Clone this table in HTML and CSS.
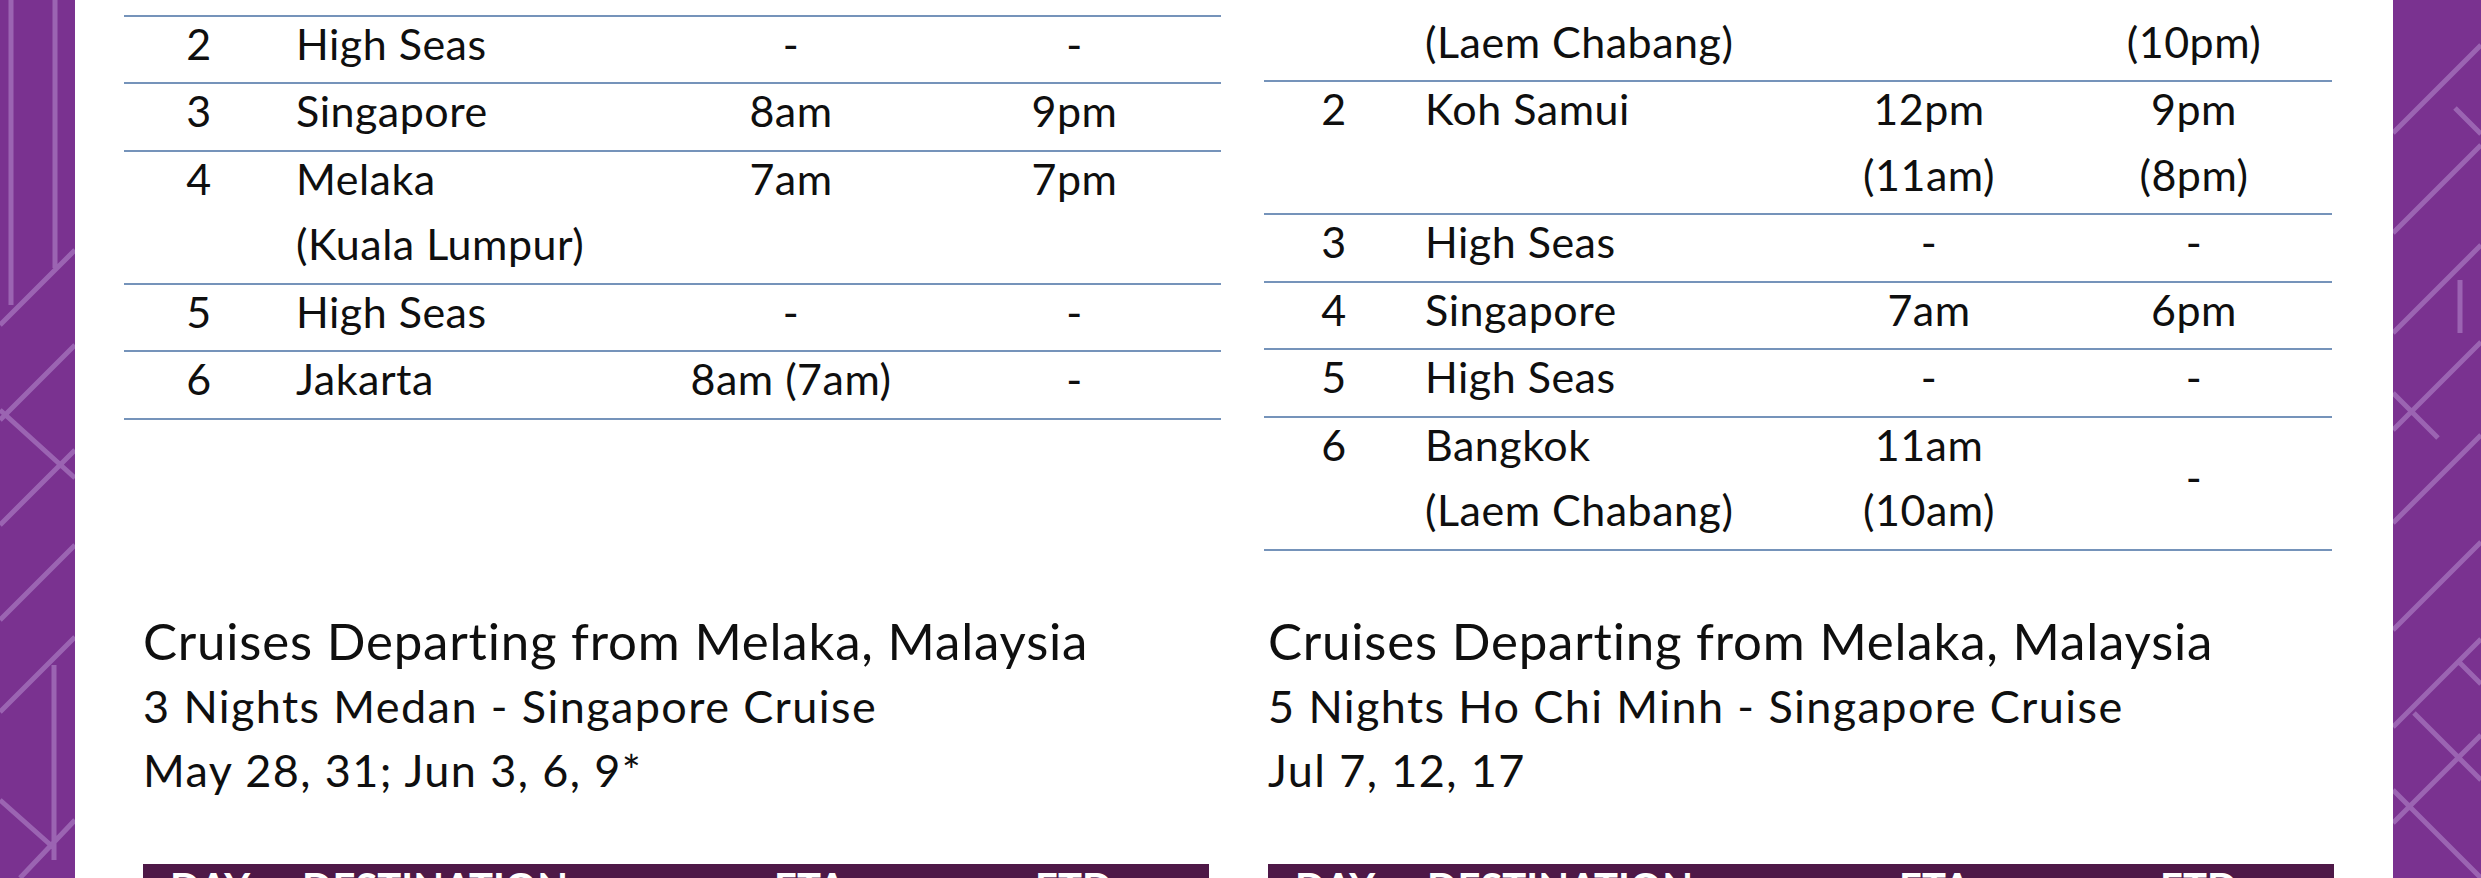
FILE: index.html
```html
<!DOCTYPE html>
<html lang="en">
<head>
<meta charset="utf-8">
<title>Cruise Itineraries</title>
<link rel="stylesheet" href="styles.css">
</head>
<body>
<div class="frame">
  <aside class="band band-left">
    <svg class="deco" viewBox="0 0 75 878" width="75" height="878" preserveAspectRatio="none">
      <path d="M11 0 V305 M55 0 V268 M75 250 L0 325 M75 345 L0 420 M0 410 L75 478 M75 450 L0 525 M75 545 L0 620 M75 637 L0 712 M54 665 V860 M0 800 L54 848 M75 820 L20 878"/>
    </svg>
  </aside>

  <main class="sheet">
    <section class="itin itin-left">
      <div class="row"><span class="c-day">1</span><span class="c-dest">Jakarta</span><span class="c-t">-</span><span class="c-t">10pm (9pm)</span></div>
      <div class="row"><span class="c-day">2</span><span class="c-dest">High Seas</span><span class="c-t">-</span><span class="c-t">-</span></div>
      <div class="row"><span class="c-day">3</span><span class="c-dest">Singapore</span><span class="c-t">8am</span><span class="c-t">9pm</span></div>
      <div class="row"><span class="c-day">4</span><span class="c-dest">Melaka<br>(Kuala Lumpur)</span><span class="c-t">7am</span><span class="c-t">7pm</span></div>
      <div class="row"><span class="c-day">5</span><span class="c-dest">High Seas</span><span class="c-t">-</span><span class="c-t">-</span></div>
      <div class="row"><span class="c-day">6</span><span class="c-dest">Jakarta</span><span class="c-t">8am (7am)</span><span class="c-t">-</span></div>
    </section>

    <section class="itin itin-right">
      <div class="row"><span class="c-day">1</span><span class="c-dest">Bangkok<br>(Laem Chabang)</span><span class="c-t">-</span><span class="c-t">11pm<br>(10pm)</span></div>
      <div class="row"><span class="c-day">2</span><span class="c-dest">Koh Samui</span><span class="c-t">12pm<br>(11am)</span><span class="c-t">9pm<br>(8pm)</span></div>
      <div class="row"><span class="c-day">3</span><span class="c-dest">High Seas</span><span class="c-t">-</span><span class="c-t">-</span></div>
      <div class="row"><span class="c-day">4</span><span class="c-dest">Singapore</span><span class="c-t">7am</span><span class="c-t">6pm</span></div>
      <div class="row"><span class="c-day">5</span><span class="c-dest">High Seas</span><span class="c-t">-</span><span class="c-t">-</span></div>
      <div class="row"><span class="c-day">6</span><span class="c-dest">Bangkok<br>(Laem Chabang)</span><span class="c-t">11am<br>(10am)</span><span class="c-t mid">-</span></div>
    </section>

    <div class="cruise cruise-left">
      <h2 class="cruise-title">Cruises Departing from Melaka, Malaysia</h2>
      <p class="cruise-line">3 Nights Medan - Singapore Cruise</p>
      <p class="cruise-line">May 28, 31; Jun 3, 6, 9*</p>
    </div>

    <div class="cruise cruise-right">
      <h2 class="cruise-title">Cruises Departing from Melaka, Malaysia</h2>
      <p class="cruise-line">5 Nights Ho Chi Minh - Singapore Cruise</p>
      <p class="cruise-line">Jul 7, 12, 17</p>
    </div>

    <div class="thead thead-left"><span class="h-day">DAY</span><span class="h-dest">DESTINATION</span><span class="h-eta">ETA</span><span class="h-etd">ETD</span></div>
    <div class="thead thead-right"><span class="h-day">DAY</span><span class="h-dest">DESTINATION</span><span class="h-eta">ETA</span><span class="h-etd">ETD</span></div>
  </main>

  <aside class="band band-right">
    <svg class="deco" viewBox="0 0 88 878" width="88" height="878" preserveAspectRatio="none">
      <path d="M0 133 L88 45 M62 108 L88 134 M0 233 L88 145 M67 280 V333 M0 333 L88 245 M0 393 L45 438 M0 430 L88 342 M0 523 L88 435 M0 630 L88 542 M67 663 L88 684 M21 713 L88 780 M0 727 L88 639 M0 790 L88 878 M0 823 L88 735"/>
    </svg>
  </aside>
</div>
</body>
</html>
```

FILE: styles.css
```css
* { box-sizing: border-box; }

html, body {
  margin: 0;
  padding: 0;
  background: #ffffff;
}

body {
  font-family: "Lato", "Liberation Sans", sans-serif;
  color: #0f0f0f;
}

.frame {
  display: flex;
  width: 2481px;
  height: 878px;
  overflow: hidden;
}

.band {
  flex: none;
  background: #7a3290;
}

.band-left { width: 75px; }
.band-right { width: 88px; }

.deco {
  display: block;
}

.deco path {
  fill: none;
  stroke: #9b64b2;
  stroke-width: 5;
}

.sheet {
  flex: 1;
  background: #ffffff;
  display: grid;
  grid-template-columns: 1097px 1068px;
  column-gap: 43px;
  align-content: start;
  align-items: start;
  padding: 0 61px 0 49px;
}

/* itinerary tables */
.itin {
  margin-top: -51px;
  font-size: 43px;
  letter-spacing: 0.5px;
  line-height: 65.5px;
}

.row {
  display: grid;
  padding-bottom: 6px;
  border-bottom: 2px solid #7593ba;
}

.itin-left .row { grid-template-columns: 150px 380px 274px 293px; }
.itin-right .row { grid-template-columns: 140px 390px 270px 268px; }

.row > span {
  margin-top: -6px;
  white-space: nowrap;
}

.c-day { text-align: center; }
.itin-left .c-dest { padding-left: 22px; }
.itin-right .c-dest { padding-left: 21px; }
.c-t { text-align: center; }
.itin-right .row > .c-t:last-child { padding-right: 8px; }
.mid { align-self: center; }

/* cruise headings */
.cruise {
  margin-top: 57px;
}

.cruise-left { margin-left: 19px; }
.cruise-right { margin-left: 4px; }

.cruise-title {
  margin: 0;
  font-size: 51px;
  font-weight: 400;
  letter-spacing: 0.8px;
  line-height: 66px;
  white-space: nowrap;
}

.cruise-line {
  margin: 0;
  font-size: 45px;
  letter-spacing: 1.4px;
  line-height: 64px;
  white-space: nowrap;
}

/* table header bars */
.thead {
  margin-top: 62.5px;
  width: 1066px;
  height: 70px;
  background: #4e1847;
  color: #ffffff;
  display: flex;
  padding-left: 27px;
  font-size: 40px;
  font-weight: 700;
  line-height: 46px;
}

.thead-left { margin-left: 19px; }
.thead-right { margin-left: 4px; }

.h-day { width: 132px; }
.h-dest { width: 472px; }
.h-eta { width: 261px; }
.h-etd { flex: 1; }
```
